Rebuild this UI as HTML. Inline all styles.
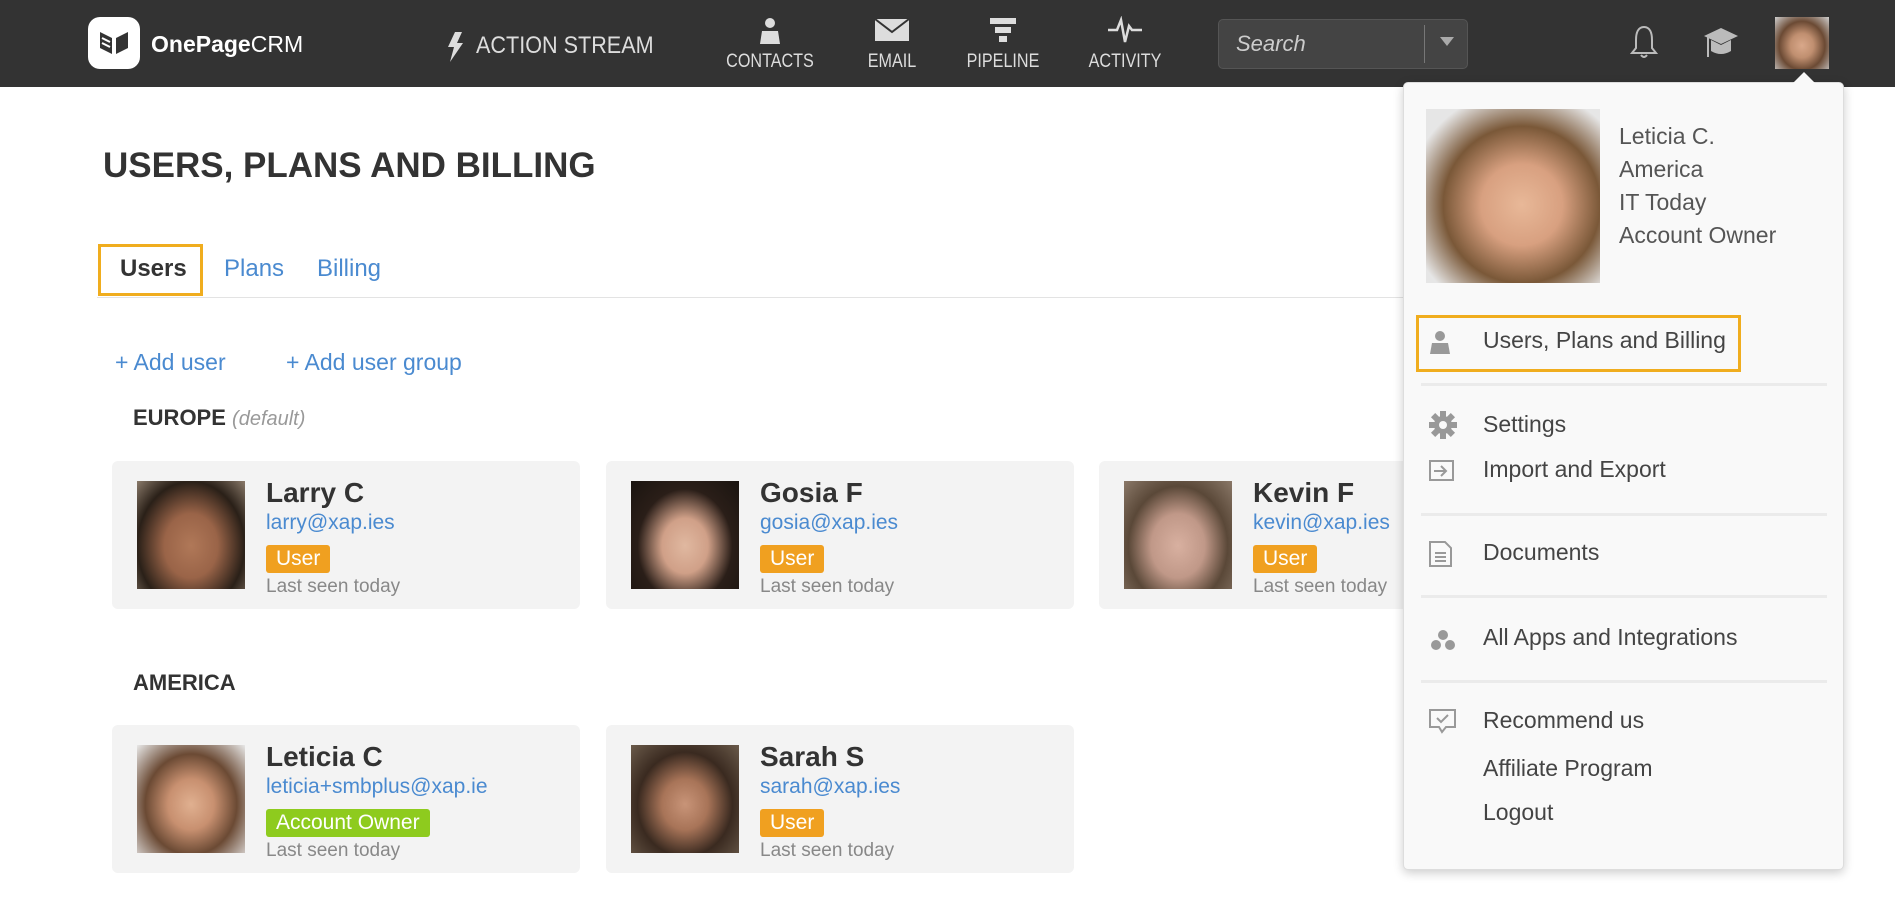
<!DOCTYPE html>
<html><head><meta charset="utf-8"><style>
*{margin:0;padding:0;box-sizing:border-box}
body{width:1895px;height:911px;overflow:hidden;background:#fff;font-family:"Liberation Sans",sans-serif;position:relative;color:#333}
.a{position:absolute;white-space:nowrap}
.nav{position:absolute;left:0;top:0;width:1895px;height:87px;background:#333}
.nl{color:#ddd;font-size:19px;transform:translateX(-50%) scaleX(.85);}
.card{position:absolute;width:468px;height:148px;background:#f3f3f3;border-radius:6px}
.ph{position:absolute;left:25px;top:20px;width:108px;height:108px}
.nm{position:absolute;left:154px;top:16px;font-size:28px;font-weight:bold;color:#333}
.em{position:absolute;left:154px;top:50px;font-size:21px;color:#4a8ad0}
.bd{position:absolute;left:154px;top:84px;height:28px;padding:0 10px;font-size:21px;line-height:28px;color:#fff;background:#f0a020;border-radius:3px}
.ls{position:absolute;left:154px;top:115px;font-size:19px;color:#888}
.mi{position:absolute;left:1483px;font-size:23px;color:#444;white-space:nowrap}
.sep{position:absolute;left:1421px;width:406px;height:3px;background:#ebebeb}
</style></head><body>
<div class="nav"></div>
<div class="a" style="left:88px;top:17px;width:52px;height:52px;background:#fff;border-radius:12px"></div>
<svg class="a" style="left:98px;top:30px" width="32" height="26" viewBox="0 0 32 26"><path d="M2 2 L14 8 L14 24 L2 18Z M30 2 L18 8 L18 24 L30 18Z" fill="#333"/><path d="M4 8 L12 12 M4 13 L12 17" stroke="#fff" stroke-width="2"/></svg>
<div class="a" style="left:151px;top:31px;font-size:23px;color:#fff"><b>OnePage</b>CRM</div>
<svg class="a" style="left:446px;top:32px" width="18" height="30"><path d="M9 0 L16 0 L11 11 L17 11 L4 30 L8 15 L2 15Z" fill="#ddd"/></svg>
<div class="a" style="left:476px;top:32px;color:#ddd;font-size:24px;transform-origin:left;transform:scaleX(.9)">ACTION STREAM</div>
<svg class="a" style="left:757px;top:17px" width="26" height="27"><circle cx="13" cy="6" r="5" fill="#ddd"/><path d="M3 27 L5 14 L21 14 L23 27Z" fill="#ddd"/></svg>
<svg class="a" style="left:874px;top:18px" width="36" height="24"><rect x="1" y="1" width="34" height="22" fill="#ddd"/><path d="M1 1 L18 14 L35 1" stroke="#333" stroke-width="2" fill="none"/></svg>
<svg class="a" style="left:990px;top:18px" width="26" height="24"><rect x="0" y="0" width="26" height="6" fill="#ddd"/><rect x="5" y="9" width="16" height="6" fill="#ddd"/><rect x="9" y="18" width="8" height="6" fill="#ddd"/></svg>
<svg class="a" style="left:1108px;top:16px" width="34" height="28"><path d="M0 14 L9 14 L13 4 L17 26 L21 10 L24 14 L34 14" stroke="#ddd" stroke-width="2.5" fill="none"/></svg>
<div class="a nl" style="left:770px;top:51px">CONTACTS</div>
<div class="a nl" style="left:892px;top:51px">EMAIL</div>
<div class="a nl" style="left:1003px;top:51px">PIPELINE</div>
<div class="a nl" style="left:1125px;top:51px">ACTIVITY</div>
<div class="a" style="left:1218px;top:19px;width:250px;height:50px;background:#444;border:1px solid #555;border-radius:5px"></div>
<div class="a" style="left:1236px;top:31px;font-size:22px;font-style:italic;color:#ccc">Search</div>
<div class="a" style="left:1424px;top:25px;width:1px;height:38px;background:#777"></div>
<div class="a" style="left:1440px;top:37px;width:0;height:0;border-left:7px solid transparent;border-right:7px solid transparent;border-top:9px solid #aaa"></div>
<svg class="a" style="left:1630px;top:24px" width="30" height="36"><path d="M14 3 C8 3 6 9 6 16 L6 24 L2 29 L26 29 L22 24 L22 16 C22 9 20 3 14 3Z M11 31 Q14 35 17 31" stroke="#bbb" stroke-width="2" fill="none"/></svg>
<svg class="a" style="left:1702px;top:24px" width="38" height="36"><path d="M2 12 L19 4 L36 12 L19 20Z" fill="#bbb"/><path d="M9 16 L9 27 Q19 33 29 27 L29 16 L19 21Z" fill="#bbb"/><path d="M6 13 L6 33" stroke="#bbb" stroke-width="2"/></svg>
<div class="a" style="left:1775px;top:17px;width:54px;height:52px;background:radial-gradient(ellipse at 50% 55%,#d9a88a 0,#c08f70 30%,#6b4a34 60%,#cfcfcf 100%)"></div>
<div class="a" style="left:103px;top:146px;font-size:35px;font-weight:bold;color:#333">USERS, PLANS AND BILLING</div>
<div class="a" style="left:97px;top:297px;width:1310px;height:1px;background:#e3e3e3"></div>
<div class="a" style="left:98px;top:244px;width:105px;height:52px;border:3px solid #f0ad1e;background:#fff"></div>
<div class="a" style="left:120px;top:255px;font-size:24px;font-weight:bold;color:#333">Users</div>
<div class="a" style="left:224px;top:255px;font-size:24px;color:#4a8ad0">Plans</div>
<div class="a" style="left:317px;top:255px;font-size:24px;color:#4a8ad0">Billing</div>
<div class="a" style="left:115px;top:349px;font-size:23px;color:#4a8ad0">+ Add user</div>
<div class="a" style="left:286px;top:349px;font-size:23px;color:#4a8ad0">+ Add user group</div>
<div class="a" style="left:133px;top:405px;font-size:22px;font-weight:bold;color:#333">EUROPE <span style="font-weight:normal;font-style:italic;color:#999;font-size:20px">(default)</span></div>
<div class="a" style="left:133px;top:670px;font-size:22px;font-weight:bold;color:#333">AMERICA</div>
<div class="card" style="left:112px;top:461px"><div class="ph" style="background:radial-gradient(ellipse at 50% 60%,#b07858 0,#9a6448 35%,#2a2018 70%,#8a7a6a 100%)"></div><div class="nm">Larry C</div><div class="em">larry@xap.ies</div><div class="bd">User</div><div class="ls">Last seen today</div></div>
<div class="card" style="left:606px;top:461px"><div class="ph" style="background:radial-gradient(ellipse at 50% 60%,#e0b8a0 0,#d0a088 30%,#2a1e18 62%,#1a1410 100%)"></div><div class="nm">Gosia F</div><div class="em">gosia@xap.ies</div><div class="bd">User</div><div class="ls">Last seen today</div></div>
<div class="card" style="left:1099px;top:461px"><div class="ph" style="background:radial-gradient(ellipse at 50% 60%,#d8b0a0 0,#c09888 35%,#5a4838 65%,#8a7868 100%)"></div><div class="nm">Kevin F</div><div class="em">kevin@xap.ies</div><div class="bd">User</div><div class="ls">Last seen today</div></div>
<div class="card" style="left:112px;top:725px"><div class="ph" style="background:radial-gradient(ellipse at 50% 55%,#e0b090 0,#c89070 30%,#6b4a34 60%,#e8e8e8 100%)"></div><div class="nm">Leticia C</div><div class="em">leticia+smbplus@xap.ie</div><div class="bd" style="background:#8ecb1e">Account Owner</div><div class="ls">Last seen today</div></div>
<div class="card" style="left:606px;top:725px"><div class="ph" style="background:radial-gradient(ellipse at 50% 55%,#c89478 0,#a87458 30%,#3a2a20 62%,#6a5a4a 100%)"></div><div class="nm">Sarah S</div><div class="em">sarah@xap.ies</div><div class="bd">User</div><div class="ls">Last seen today</div></div>
<div class="a" style="left:1403px;top:82px;width:441px;height:788px;background:#f9f9f9;border:1px solid #ddd;border-radius:5px;box-shadow:0 3px 10px rgba(0,0,0,.2)"></div>
<div class="a" style="left:1793px;top:72px;width:0;height:0;border-left:11px solid transparent;border-right:11px solid transparent;border-bottom:11px solid #f9f9f9"></div>
<div class="a" style="left:1426px;top:109px;width:174px;height:174px;background:radial-gradient(ellipse at 55% 55%,#e8b898 0,#d8a080 30%,#7a5838 58%,#e6e6e6 85%)"></div>
<div class="a" style="left:1619px;top:120px;font-size:23px;color:#555;line-height:33px;white-space:normal">Leticia C.<br>America<br>IT Today<br>Account Owner</div>
<div class="a" style="left:1416px;top:315px;width:325px;height:57px;border:3px solid #f0ad1e"></div>
<svg class="a" style="left:1429px;top:330px" width="22" height="24"><circle cx="11" cy="6" r="5" fill="#999"/><path d="M1 24 L3 13 L19 13 L21 24Z" fill="#999"/></svg>
<div class="mi" style="top:327px">Users, Plans and Billing</div>
<div class="sep" style="top:383px"></div>
<svg class="a" style="left:1428px;top:410px" width="30" height="30" viewBox="0 0 30 30"><g fill="#999"><circle cx="15" cy="15" r="9"/><g id="t"><rect x="12" y="1" width="6" height="6"/><rect x="12" y="23" width="6" height="6"/><rect x="1" y="12" width="6" height="6"/><rect x="23" y="12" width="6" height="6"/></g><use href="#t" transform="rotate(45 15 15)"/></g><circle cx="15" cy="15" r="4" fill="#f9f9f9"/></svg>
<div class="mi" style="top:411px">Settings</div>
<svg class="a" style="left:1429px;top:460px" width="26" height="22"><rect x="1" y="1" width="23" height="19" fill="none" stroke="#999" stroke-width="2"/><path d="M5 11 L17 11 M12 6 L17 11 L12 16" stroke="#999" stroke-width="2" fill="none"/></svg>
<div class="mi" style="top:456px">Import and Export</div>
<div class="sep" style="top:513px"></div>
<svg class="a" style="left:1429px;top:541px" width="24" height="26"><path d="M1 1 L16 1 L22 7 L22 25 L1 25Z" fill="none" stroke="#999" stroke-width="2"/><path d="M6 12 H17 M6 16 H17 M6 20 H17" stroke="#999" stroke-width="2"/></svg>
<div class="mi" style="top:539px">Documents</div>
<div class="sep" style="top:595px"></div>
<svg class="a" style="left:1430px;top:629px" width="26" height="22"><circle cx="13" cy="6" r="5" fill="#999"/><circle cx="6" cy="16" r="5" fill="#999"/><circle cx="20" cy="16" r="5" fill="#999"/></svg>
<div class="mi" style="top:624px">All Apps and Integrations</div>
<div class="sep" style="top:680px"></div>
<svg class="a" style="left:1429px;top:709px" width="28" height="26"><path d="M1 1 H26 V18 H17 L13 23 L10 18 H1Z" fill="none" stroke="#999" stroke-width="2"/><path d="M8 9 L12 13 L19 6" stroke="#999" stroke-width="2" fill="none"/></svg>
<div class="mi" style="top:707px">Recommend us</div>
<div class="mi" style="top:755px">Affiliate Program</div>
<div class="mi" style="top:799px">Logout</div>
</body></html>
